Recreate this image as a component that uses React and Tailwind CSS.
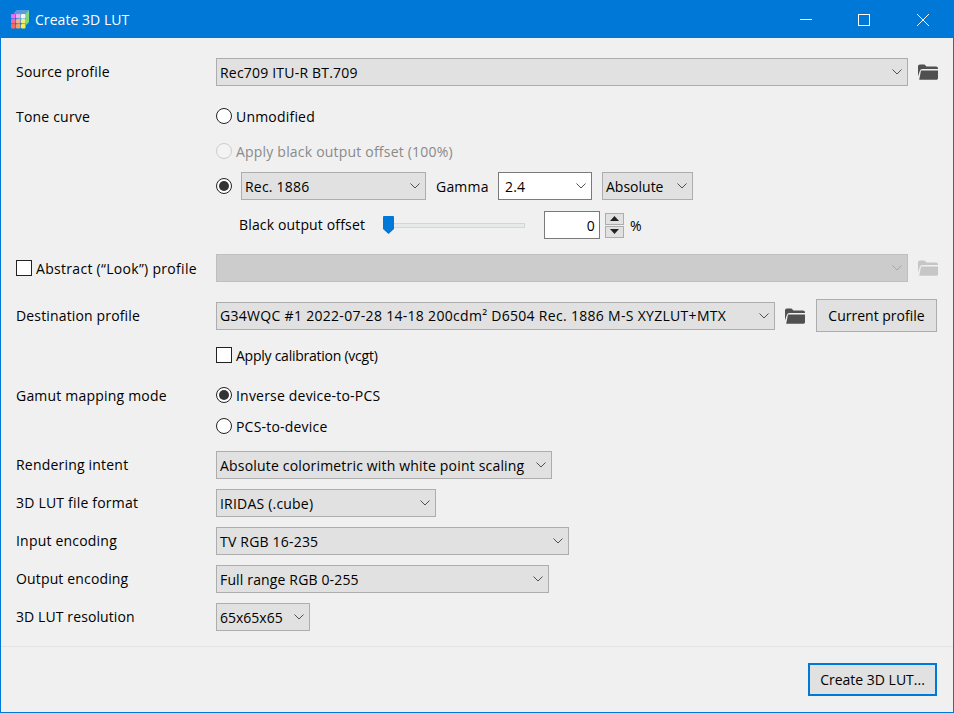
const font = 'font-["Open_Sans","Noto_Sans",sans-serif]';

function Chevron({ disabled }) {
  return (
    <svg width="10" height="6" viewBox="0 0 10 6" className="shrink-0">
      <path d="M.5.5L5 5 9.500.5" fill="none" stroke={disabled ? '#a6a6a6' : '#505050'} strokeWidth="1" />
    </svg>
  );
}

function Combo({ value, className = '', textClass = '', white, disabled }) {
  const skin = disabled
    ? 'bg-[#cccccc] border-[#bfbfbf]'
    : white
      ? 'bg-white border-[#7a7a7a] pl-[6px]'
      : 'bg-[#e1e1e1] border-[#adadad] pl-[3px]';
  return (
    <div className={`h-[28px] border-[1.5px] flex items-center pr-[5px] justify-between shrink-0 ${skin} ${className}`}>
      <span className={`whitespace-nowrap ${textClass}`}>{value}</span>
      <Chevron disabled={disabled} />
    </div>
  );
}

function Radio({ checked, disabled }) {
  return (
    <span className={`w-[16px] h-[16px] rounded-full border flex items-center justify-center shrink-0 ${disabled ? 'border-[#cccccc] bg-[#f3f3f3]' : 'border-[#222222] bg-white'}`}>
      {checked && <span className="w-[10px] h-[10px] rounded-full bg-[#333333]" />}
    </span>
  );
}

function Checkbox() {
  return <span className="w-[16px] h-[16px] border border-[#222222] bg-white shrink-0" />;
}

function Folder({ disabled }) {
  const c = disabled ? '#c6c6c6' : '#505050';
  return (
    <svg width="20" height="16" viewBox="0 0 20 16" className="shrink-0">
      <path d="M0 2.500C0 1.200.8.500 2 .5h4.500l2 2H18c1.200 0 2 .8 2 2V5H4.500C3 5 2.200 5.800 1.800 7L0 12.500z" fill={c} />
      <path d="M3 6.500h17V14c0 1-.8 1.800-1.800 1.800H1.200z" fill={c} />
    </svg>
  );
}

function CubeIcon() {
  const cols = ['#f26bf0', '#f6a6f0', '#f4f4f4', '#f46a9a', '#f6b08a', '#f0ee78', '#f46a62', '#f6a060', '#f4ee50'];
  return (
    <svg width="20" height="20" viewBox="0 0 20 20" className="shrink-0">
      <path d="M4 3l3-3h12v12l-3 3z" fill="#5fc8c0" opacity="0.7" />
      <path d="M16 3l3-3v6l-3 3zM16 9l3-3v6l-3 3z" fill="#7fd878" />
      <path d="M4 3l3-3h12l-3 3z" fill="#5a9ae0" />
      {cols.map((c, i) => (
        <rect key={i} x={1 + (i % 3) * 5} y={4 + Math.floor(i / 3) * 5} width="4.500" height="4.500" rx="1" fill={c} />
      ))}
    </svg>
  );
}

function Row({ label, className, labelClass = '', children }) {
  return (
    <div className={`flex items-center ${className}`}>
      <div className={`w-[200px] shrink-0 whitespace-nowrap ${labelClass}`}>{label}</div>
      {children}
    </div>
  );
}

export default function App() {
  return (
    <div className={`w-[954px] h-[713px] flex flex-col border border-[#0078d7] bg-[#f0f0f0] text-[14px] tracking-[0.2px] text-black overflow-hidden ${font}`}>
      {/* Title bar */}
      <div className="h-[37px] bg-[#0078d7] flex items-center text-white shrink-0">
        <div className="pl-[9px] pr-[5px]"><CubeIcon /></div>
        <span className="tracking-[0.05px]">Create 3D LUT</span>
        <div className="ml-auto flex pr-[1px]">
          <div className="w-[58px] h-[37px] flex items-center justify-center">
            <svg width="12" height="12" viewBox="0 0 12 12"><path d="M0 5.500h12" stroke="#fff" /></svg>
          </div>
          <div className="w-[58px] h-[37px] flex items-center justify-center">
            <svg width="12" height="12" viewBox="0 0 12 12"><rect x=".5" y=".5" width="11" height="11" fill="none" stroke="#fff" /></svg>
          </div>
          <div className="w-[59px] h-[37px] flex items-center justify-center">
            <svg width="12" height="12" viewBox="0 0 12 12"><path d="M0 0l12 12M12 0L0 12" stroke="#fff" /></svg>
          </div>
        </div>
      </div>

      {/* Form */}
      <div className="pl-[15px] pt-[20px] flex flex-col">
        <Row label="Source profile" labelClass="pb-[2px]" className="h-[28px]">
          <Combo value="Rec709 ITU-R BT.709" className="w-[692px]" />
          <div className="ml-[10px]"><Folder /></div>
        </Row>

        <Row label="Tone curve" className="h-[20px] mt-[20px]">
          <div className="flex items-center gap-[4px]"><Radio /><span>Unmodified</span></div>
        </Row>

        <Row label="" className="h-[20px] mt-[15px]">
          <div className="flex items-center gap-[4px] text-[#8a8a8a]"><Radio disabled /><span>Apply black output offset (100%)</span></div>
        </Row>

        <Row label="" className="h-[28px] mt-[11px]">
          <Radio checked />
          <Combo value="Rec. 1886" className="w-[185px] ml-[9px]" />
          <span className="ml-[10px] w-[62px]">Gamma</span>
          <Combo value="2.4" white className="w-[94px]" />
          <Combo value="Absolute" textClass="tracking-normal" className="w-[91px] ml-[10px]" />
        </Row>

        <Row label="" className="h-[28px] mt-[11px]">
          <span className="w-[167px] pl-[23px] pb-[2px] whitespace-nowrap tracking-[0.15px]">Black output offset</span>
          <div className="relative w-[142px] h-[5px] bg-[#e7eaea] border border-[#d6d6d6]">
            <svg width="11" height="18" viewBox="0 0 11 18" className="absolute left-[-1px] top-[-8px]">
              <path d="M1 0h9a1 1 0 0 1 1 1v12l-5.500 5L0 13V1a1 1 0 0 1 1-1z" fill="#0078d7" />
            </svg>
          </div>
          <div className="ml-[19px] w-[56px] h-[28px] bg-white border-[1.5px] border-[#7a7a7a] flex items-center justify-end pr-[4px]">0</div>
          <div className="ml-[5px] w-[19px] h-[25px] flex flex-col justify-between">
            <div className="h-[12px] bg-[#e1e1e1] border border-[#adadad] flex items-center justify-center">
              <svg width="9" height="5" viewBox="0 0 9 5"><path d="M4.500 0L9 5H0z" fill="#222" /></svg>
            </div>
            <div className="h-[12px] bg-[#e1e1e1] border border-[#adadad] flex items-center justify-center">
              <svg width="9" height="5" viewBox="0 0 9 5"><path d="M0 0h9L4.500 5z" fill="#222" /></svg>
            </div>
          </div>
          <span className="ml-[6px]">%</span>
        </Row>

        <div className="flex items-center h-[28px] mt-[15px]">
          <div className="w-[200px] shrink-0 flex items-center gap-[4px] whitespace-nowrap"><Checkbox /><span className="tracking-[0.3px]">Abstract (“Look”) profile</span></div>
          <Combo value="" disabled className="w-[692px]" />
          <div className="ml-[10px]"><Folder disabled /></div>
        </div>

        <Row label="Destination profile" labelClass="tracking-[0.15px]" className="h-[33px] mt-[17px]">
          <Combo value="G34WQC #1 2022-07-28 14-18 200cdm² D6504 Rec. 1886 M-S XYZLUT+MTX" textClass="tracking-[0.3px]" className="w-[559px]" />
          <div className="ml-[10px]"><Folder /></div>
          <button className="ml-[11px] w-[121px] h-[33px] bg-[#e1e1e1] border-[1.5px] border-[#adadad] tracking-normal">Current profile</button>
        </Row>

        <Row label="" className="h-[20px] mt-[13px]">
          <div className="flex items-center gap-[4px]"><Checkbox /><span className="tracking-[-0.25px]">Apply calibration (vcgt)</span></div>
        </Row>

        <Row label="Gamut mapping mode" className="h-[20px] mt-[20px]">
          <div className="flex items-center gap-[4px]"><Radio checked /><span>Inverse device-to-PCS</span></div>
        </Row>

        <Row label="" className="h-[20px] mt-[11px]">
          <div className="flex items-center gap-[4px]"><Radio /><span>PCS-to-device</span></div>
        </Row>

        <Row label="Rendering intent" labelClass="pb-[2px]" className="h-[28px] mt-[15px]">
          <Combo value="Absolute colorimetric with white point scaling" textClass="tracking-[0.18px]" className="w-[336px]" />
        </Row>
        <Row label="3D LUT file format" labelClass="pb-[2px]" className="h-[28px] mt-[10px]">
          <Combo value="IRIDAS (.cube)" className="w-[220px]" />
        </Row>
        <Row label="Input encoding" labelClass="pb-[2px]" className="h-[28px] mt-[10px]">
          <Combo value="TV RGB 16-235" className="w-[353px]" />
        </Row>
        <Row label="Output encoding" labelClass="pb-[2px] tracking-[0.15px]" className="h-[28px] mt-[10px]">
          <Combo value="Full range RGB 0-255" textClass="tracking-[0.15px]" className="w-[333px]" />
        </Row>
        <Row label="3D LUT resolution" labelClass="pb-[2px] tracking-[0.1px]" className="h-[28px] mt-[10px]">
          <Combo value="65x65x65" textClass="tracking-normal" className="w-[94px]" />
        </Row>
      </div>

      {/* Footer */}
      <div className="mt-[15px] border-t border-[#e3e3e3] flex justify-end pr-[16px] pt-[16px]">
        <button className="w-[129px] h-[33px] bg-[#e1e1e1] border-2 border-[#0078d7] tracking-normal">Create 3D LUT...</button>
      </div>
    </div>
  );
}
